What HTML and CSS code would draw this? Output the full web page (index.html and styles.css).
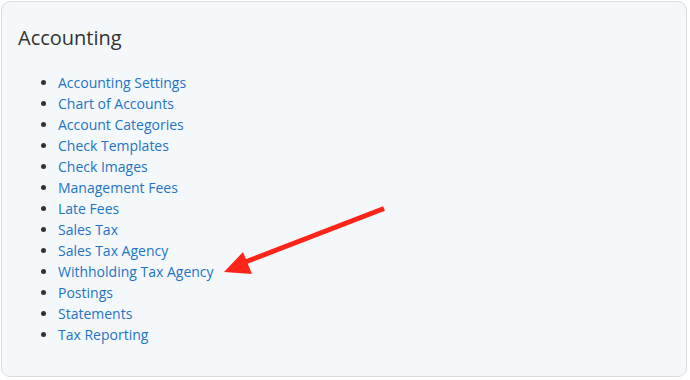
FILE: index.html
```html
<!DOCTYPE html>
<html lang="en">
<head>
    <meta charset="UTF-8">
    <meta name="viewport" content="width=device-width, initial-scale=1.0">
    <title>Accounting</title>
    <link rel="stylesheet" href="styles.css">
</head>
<body>
    <div class="card">
        <h2 class="card-title">Accounting</h2>
        <ul class="link-list">
            <li><a href="#">Accounting Settings</a></li>
            <li><a href="#">Chart of Accounts</a></li>
            <li><a href="#">Account Categories</a></li>
            <li><a href="#">Check Templates</a></li>
            <li><a href="#">Check Images</a></li>
            <li><a href="#">Management Fees</a></li>
            <li><a href="#">Late Fees</a></li>
            <li><a href="#">Sales Tax</a></li>
            <li><a href="#">Sales Tax Agency</a></li>
            <li><a href="#">Withholding Tax Agency</a></li>
            <li><a href="#">Postings</a></li>
            <li><a href="#">Statements</a></li>
            <li><a href="#">Tax Reporting</a></li>
        </ul>
        <svg class="arrow" width="690" height="380" viewBox="0 0 690 380">
            <line x1="384" y1="208.5" x2="240" y2="264" stroke="#ff2418" stroke-width="5"/>
            <polygon points="224,272 243,252 252,274" fill="#ff2418"/>
        </svg>
    </div>
</body>
</html>
```

FILE: styles.css
```css
* {padding: 0; margin: 0; box-sizing: border-box;}
body {margin: 1px; font-family: "Open Sans", "Liberation Sans", sans-serif; background: #fff;}
.card {width: 686px; height: 376px; background: #f5f8fb; border: 1px solid #dcdcdc; border-radius: 9px; padding: 20px 16px;}
.card-title {font-size: 20px; font-weight: 400; color: #333; line-height: 32px;}
.link-list {margin-top: 18px; padding-left: 40px; font-size: 14px; line-height: 21px; color: #333;}
.link-list a {color: #2274c4; text-decoration: none;}
.arrow {position: absolute; left: 0; top: 0; pointer-events: none;}
```
